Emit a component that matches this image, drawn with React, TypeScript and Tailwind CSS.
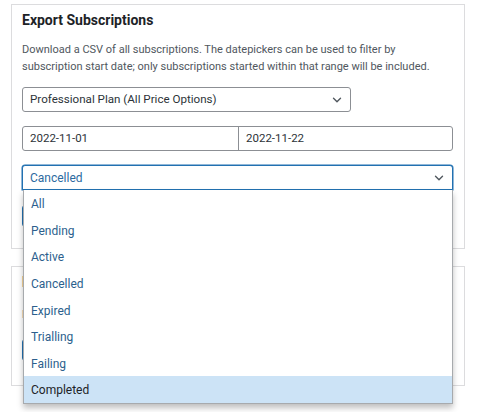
import { ChevronDown } from "lucide-react";

const statuses = [
  "All",
  "Pending",
  "Active",
  "Cancelled",
  "Expired",
  "Trialling",
  "Failing",
  "Completed",
];

const font = { fontFamily: "Roboto, 'Liberation Sans', sans-serif" };

function StatusDropdown() {
  return (
    <div className="relative mt-[14px]">
      <div className="flex h-[25px] items-center justify-between rounded-t-[3px] rounded-b-none border border-[#2271b1] bg-white pl-[7px] pr-[6px] text-[12px] text-[#2c6aa0] shadow-[0_0_0_0.5px_#2271b1]">
        <span>Cancelled</span>
        <ChevronDown size={14} strokeWidth={2.4} className="text-[#50575e]" />
      </div>
      <ul className="absolute left-[1px] right-0 top-[25px] z-10 border border-t-0 border-[#a7aaad] bg-white shadow-[0_4px_6px_rgba(0,0,0,0.25)]">
        {statuses.map((s) => (
          <li
            key={s}
            className={
              s === "Completed"
                ? "flex h-[26.6px] items-center bg-[#cce3f6] pl-[7px] pt-[2px] text-[12px] text-[#1d2327]"
                : "flex h-[26.6px] items-center pl-[7px] pt-[2px] text-[12px] text-[#2c5f8d]"
            }
          >
            {s}
          </li>
        ))}
      </ul>
    </div>
  );
}

export default function App() {
  return (
    <div className="min-h-[412px] bg-white pl-[11px] pt-[4px]" style={font}>
      <section className="w-[454px] border border-[#dcdcde] bg-white px-[10px] pb-[21px] pt-[5px]">
        <h2 className="text-[14px] font-bold leading-[20px] text-[#1d2327]">
          Export Subscriptions
        </h2>
        <p className="mt-[11px] text-[11px] leading-[17px] text-[#50575e]">
          Download a CSV of all subscriptions. The datepickers can be used to filter by
          subscription start date; only subscriptions started within that range will be included.
        </p>

        <div className="mt-[12px] flex h-[25px] w-[329px] items-center justify-between rounded-[3px] border border-[#8c8f94] pl-[7px] pr-[6px] text-[11.6px] text-[#2c3338]">
          <span>Professional Plan (All Price Options)</span>
          <ChevronDown size={14} strokeWidth={2.4} className="text-[#50575e]" />
        </div>

        <div className="mt-[14px] flex h-[25px] w-[431px] rounded-[3px] border border-[#8c8f94] text-[11.5px] text-[#2c3338]">
          <div className="flex w-[216px] items-center border-r border-[#8c8f94] pl-[7px]">
            2022-11-01
          </div>
          <div className="flex flex-1 items-center pl-[7px]">2022-11-22</div>
        </div>

        <div className="w-[431px]">
          <StatusDropdown />
        </div>

        <button className="mt-[15px] h-[22px] rounded-[3px] border border-[#2271b1] bg-[#f6f7f7] px-[10px] text-[12px] text-[#2271b1]">
          Download CSV
        </button>
      </section>

      <section className="mt-[17px] w-[454px] border border-[#dcdcde] bg-white px-[10px] pb-[24px] pt-[5px]">
        <h2 className="text-[14px] font-bold leading-[20px] text-[#1d2327]">Export Orders</h2>
        <p className="mt-[14px] text-[11px] leading-[17px] text-[#50575e]">
          Download a CSV of all orders within the chosen range.
        </p>
        <button className="mt-[16px] h-[22px] rounded-[3px] border border-[#2271b1] bg-[#f6f7f7] px-[10px] text-[12px] text-[#2271b1]">
          Download CSV
        </button>
      </section>
    </div>
  );
}
